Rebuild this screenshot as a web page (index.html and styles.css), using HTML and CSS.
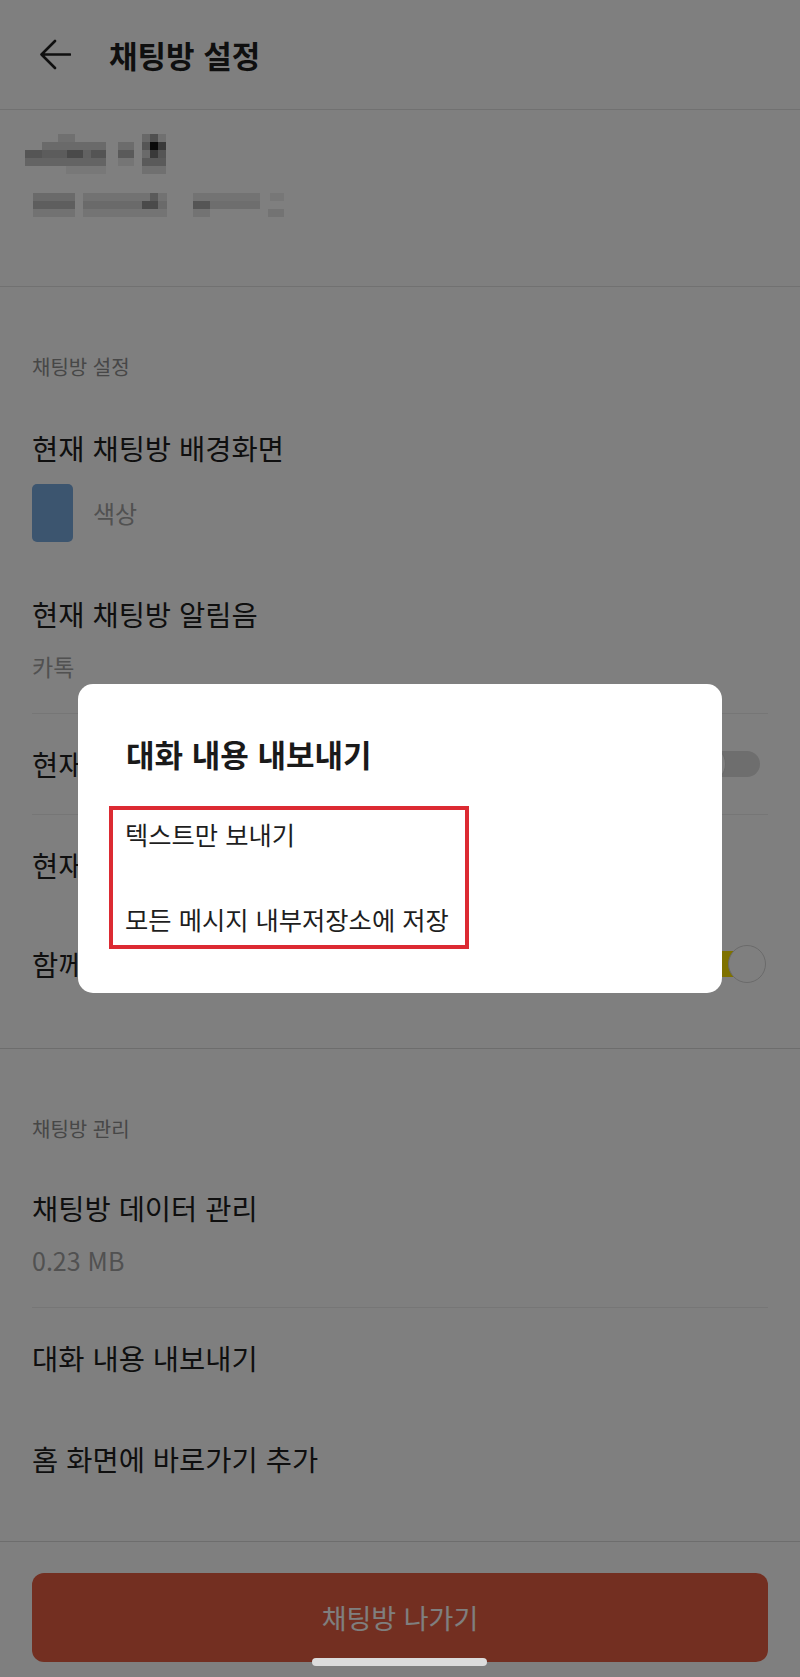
FILE: index.html
```html
<!DOCTYPE html>
<html lang="ko">
<head>
<meta charset="utf-8">
<title>채팅방 설정</title>
<link rel="stylesheet" href="styles.css">
</head>
<body>
<div class="page">
  <header class="header">
    <svg class="back" width="32" height="32" viewBox="0 0 32 32">
      <path d="M31 15.5H2.5M16 2L2.5 15.5L16 29" fill="none" stroke="#1e1e1e" stroke-width="2.6" stroke-linecap="round" stroke-linejoin="round"/>
    </svg>
    <h1 class="title">채팅방 설정</h1>
  </header>

  <section class="profile">
    <svg class="mosaic" width="290" height="120" viewBox="0 0 290 120">
      <g transform="translate(0,24)">
        <rect x="58" y="0" width="17" height="8" fill="#e0e0e0"/>
        <rect x="142" y="0" width="8" height="8" fill="#d0d0d0"/>
        <rect x="150" y="0" width="8" height="8" fill="#a0a0a0"/>
        <rect x="158" y="0" width="8" height="8" fill="#e0e0e0"/>
        <rect x="42" y="8" width="64" height="8" fill="#d4d4d4"/>
        <rect x="118" y="8" width="16" height="8" fill="#d8d8d8"/>
        <rect x="142" y="8" width="8" height="8" fill="#aaaaaa"/>
        <rect x="150" y="8" width="8" height="8" fill="#141414"/>
        <rect x="158" y="8" width="8" height="8" fill="#747474"/>
        <rect x="25" y="16" width="17" height="8" fill="#aaaaaa"/>
        <rect x="42" y="16" width="25" height="8" fill="#b8b8b8"/>
        <rect x="67" y="16" width="16" height="8" fill="#949494"/>
        <rect x="83" y="16" width="8" height="8" fill="#c4c4c4"/>
        <rect x="91" y="16" width="15" height="8" fill="#a8a8a8"/>
        <rect x="118" y="16" width="16" height="8" fill="#b4b4b4"/>
        <rect x="142" y="16" width="8" height="8" fill="#d4d4d4"/>
        <rect x="150" y="16" width="8" height="8" fill="#747474"/>
        <rect x="158" y="16" width="8" height="8" fill="#aaaaaa"/>
        <rect x="25" y="24" width="81" height="8" fill="#c8c8c8"/>
        <rect x="118" y="24" width="16" height="8" fill="#eaeaea"/>
        <rect x="142" y="24" width="24" height="8" fill="#b4b4b4"/>
        <rect x="66" y="32" width="40" height="8" fill="#f0f0f0"/>
        <rect x="142" y="32" width="24" height="8" fill="#e0e0e0"/>
      </g>
      <g transform="translate(0,83)">
        <rect x="33" y="0" width="42" height="8" fill="#d4d4d4"/>
        <rect x="83" y="0" width="84" height="8" fill="#e4e4e4"/>
        <rect x="150" y="0" width="8" height="8" fill="#b4b4b4"/>
        <rect x="193" y="0" width="67" height="8" fill="#e6e6e6"/>
        <rect x="270" y="0" width="14" height="8" fill="#eeeeee"/>
        <rect x="33" y="8" width="42" height="8" fill="#bcbcbc"/>
        <rect x="83" y="8" width="84" height="8" fill="#d4d4d4"/>
        <rect x="142" y="8" width="16" height="8" fill="#949494"/>
        <rect x="193" y="8" width="17" height="8" fill="#aaaaaa"/>
        <rect x="210" y="8" width="50" height="8" fill="#dcdcdc"/>
        <rect x="33" y="16" width="42" height="8" fill="#e4e4e4"/>
        <rect x="83" y="16" width="84" height="8" fill="#e8e8e8"/>
        <rect x="193" y="16" width="17" height="8" fill="#e6e6e6"/>
        <rect x="268" y="16" width="16" height="8" fill="#e6e6e6"/>
      </g>
    </svg>
  </section>

  <section class="group">
    <div class="label">채팅방 설정</div>

    <div class="item first">
      <div class="item-title">현재 채팅방 배경화면</div>
      <div class="swatch-row">
        <span class="swatch"></span>
        <span class="sub">색상</span>
      </div>
    </div>

    <div class="item">
      <div class="item-title">현재 채팅방 알림음</div>
      <div class="sub sub-line">카톡</div>
    </div>

    <div class="divider inset"></div>

    <div class="item row">
      <div class="item-title">현재 채팅방 알림 끄기</div>
      <span class="switch"><span class="knob"></span></span>
    </div>

    <div class="divider inset"></div>

    <div class="item row">
      <div class="item-title">현재 채팅방 입력창 잠금</div>
    </div>

    <div class="item row last">
      <div class="item-title">함께 보는 채팅방 설정</div>
      <span class="switch on"><span class="knob"></span></span>
    </div>
  </section>

  <section class="group group-manage">
    <div class="label">채팅방 관리</div>

    <div class="item first-m">
      <div class="item-title">채팅방 데이터 관리</div>
      <div class="sub sub-line">0.23 MB</div>
    </div>

    <div class="divider inset"></div>

    <div class="item plain">
      <div class="item-title">대화 내용 내보내기</div>
    </div>

    <div class="item plain wide">
      <div class="item-title">홈 화면에 바로가기 추가</div>
    </div>
  </section>

  <div class="footer">
    <button class="leave">채팅방 나가기</button>
  </div>
</div>

<div class="scrim">
  <div class="dialog">
    <h2 class="dialog-title">대화 내용 내보내기</h2>
    <div class="options">
      <div class="option">텍스트만 보내기</div>
      <div class="option">모든 메시지 내부저장소에 저장</div>
    </div>
  </div>
</div>

<div class="home-indicator"></div>
</body>
</html>
```

FILE: styles.css
```css
* {
  box-sizing: border-box;
}

html, body {
  margin: 0;
  padding: 0;
}

body {
  width: 800px;
  height: 1677px;
  overflow: hidden;
  background: #ffffff;
  font-family: "Noto Sans CJK KR", "Noto Sans", sans-serif;
  color: #1e1e1e;
  position: relative;
}

.page {
  width: 800px;
}

.header {
  height: 110px;
  border-bottom: 1px solid #e2e2e2;
  display: flex;
  align-items: center;
  padding-left: 39px;
}

.back {
  flex: none;
}

.title {
  margin: 0 0 0 38px;
  font-size: 31px;
  font-weight: 700;
  line-height: 36px;
}

.profile {
  height: 177px;
  border-bottom: 1px solid #e2e2e2;
  overflow: hidden;
}

.mosaic {
  display: block;
}

.group {
  padding: 68px 32px 66px;
  border-bottom: 1px solid #dadada;
}

.label {
  font-size: 20px;
  line-height: 24px;
  color: #8e8e8e;
}

.item-title {
  font-size: 28.5px;
  line-height: 36px;
  color: #1e1e1e;
}

.sub {
  font-size: 23px;
  color: #a2a2a2;
}

.sub-line {
  line-height: 30px;
  margin-top: 19px;
}

.item {
  margin-top: 54px;
}

.item.first {
  margin-top: 51px;
}

.swatch-row {
  margin-top: 18px;
  display: flex;
  align-items: center;
  height: 58px;
}

.swatch {
  width: 41px;
  height: 58px;
  border-radius: 5px;
  background: #78aade;
  margin-right: 20px;
}

.swatch-row .sub {
  font-size: 24px;
  line-height: 30px;
}

.divider.inset {
  height: 1px;
  background: #ececec;
  margin-top: 32px;
}

.item.row {
  margin-top: 32px;
  display: flex;
  align-items: center;
  justify-content: space-between;
  height: 36px;
}

.item.row.last {
  margin-top: 63px;
}

.switch {
  position: relative;
  width: 66px;
  height: 26px;
  border-radius: 13px;
  background: #dcdcdc;
  margin-right: 8px;
}

.switch .knob {
  position: absolute;
  top: -6px;
  left: -6px;
  width: 38px;
  height: 38px;
  border-radius: 50%;
  background: #ffffff;
  border: 1px solid #d4d4d4;
}

.switch.on {
  background: #fee500;
}

.switch.on .knob {
  left: auto;
  right: -6px;
}

.group-manage {
  padding-bottom: 64px;
}

.item.first-m {
  margin-top: 49px;
}

.group-manage .sub-line {
  font-size: 25px;
}

.item.plain {
  margin-top: 32px;
}

.item.plain.wide {
  margin-top: 65px;
}

.footer {
  padding: 31px 32px 0;
}

.leave {
  display: block;
  width: 100%;
  height: 89px;
  border: none;
  border-radius: 12px;
  background: #e65f43;
  color: #ffffff;
  font-family: "Noto Sans CJK KR", sans-serif;
  font-size: 27px;
}

.scrim {
  position: absolute;
  inset: 0;
  background: rgba(0, 0, 0, 0.5);
  display: flex;
  align-items: center;
  justify-content: center;
}

.dialog {
  width: 644px;
  height: 309px;
  background: #ffffff;
  border-radius: 15px;
  padding: 52px 48px 0 31px;
}

.dialog-title {
  margin: 0 0 0 17px;
  font-size: 31px;
  font-weight: 700;
  line-height: 36px;
  color: #1a1a1a;
}

.options {
  margin-top: 34px;
  width: 360px;
  border: 4px solid #dc2a32;
  padding: 9px 12px 11px;
}

.option {
  font-size: 25.3px;
  line-height: 30px;
  color: #1e1e1e;
  white-space: nowrap;
}

.option + .option {
  margin-top: 55px;
}

.home-indicator {
  position: absolute;
  left: 312px;
  top: 1658px;
  width: 175px;
  height: 8px;
  border-radius: 4px;
  background: #dcdcdc;
}
```
